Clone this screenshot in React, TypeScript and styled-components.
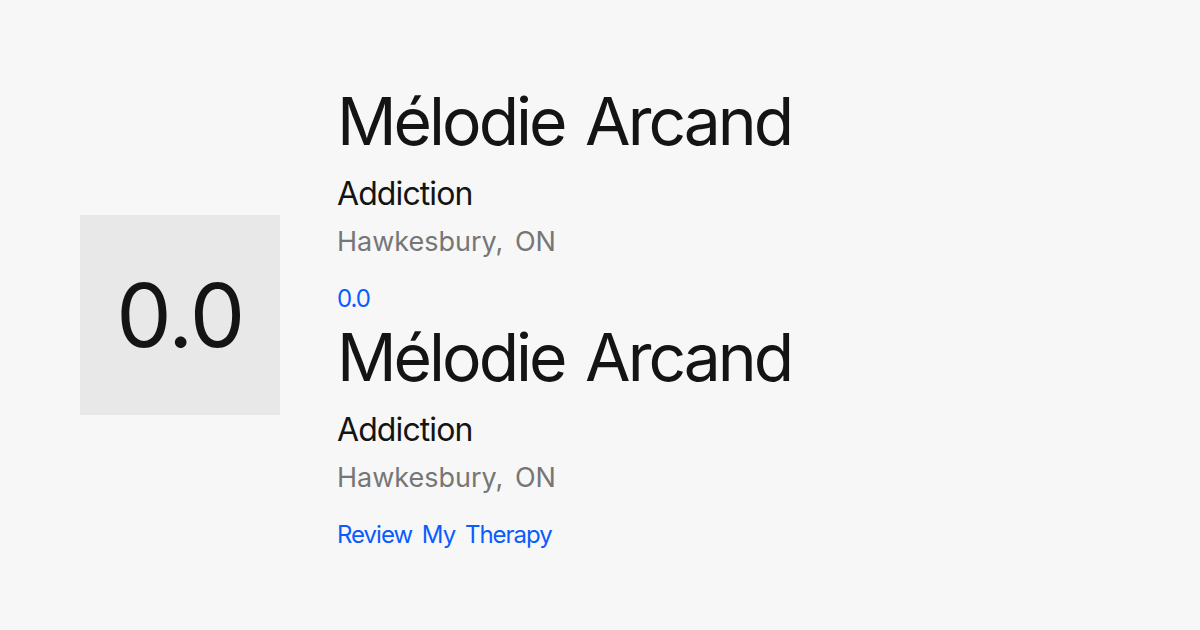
import React from "react";
import styled, { createGlobalStyle } from "styled-components";

const Global = createGlobalStyle`
  html, body { margin: 0; padding: 0; background: #f7f7f7; }
  body { font-family: Inter, "Liberation Sans", Arial, sans-serif; color: #141414; }
`;

const Page = styled.div`
  width: 1200px;
  height: 630px;
  display: flex;
  align-items: center;
  padding-left: 80px;
  box-sizing: border-box;
  gap: 57px;
`;

const ScoreBox = styled.div`
  width: 200px;
  height: 200px;
  background: #e8e8e8;
  display: flex;
  align-items: center;
  justify-content: center;
  font-size: 88px;
  line-height: 1;
  letter-spacing: -1.5px;
  color: #141414;
`;

const Info = styled.div`
  display: flex;
  flex-direction: column;
  padding-top: 5px;
`;

const Name = styled.div<{ $gap?: number }>`
  font-size: 66px;
  line-height: 66px;
  letter-spacing: -3px;
  word-spacing: 5px;
  margin-top: ${(p) => p.$gap ?? 0}px;
`;

const Specialty = styled.div`
  font-size: 32px;
  line-height: 32px;
  letter-spacing: -0.9px;
  margin-top: 24px;
`;

const Location = styled.div`
  font-size: 27px;
  line-height: 27px;
  color: #767676;
  margin-top: 18px;
  word-spacing: 4px;
`;

const Link = styled.a`
  font-size: 24px;
  line-height: 24px;
  color: #0a5cff;
  text-decoration: none;
  letter-spacing: -1px;
  word-spacing: 4px;
  margin-top: 32px;
`;

export default function App() {
  return (
    <>
      <Global />
      <Page>
        <ScoreBox>0.0</ScoreBox>
        <Info>
          <Name>Mélodie Arcand</Name>
          <Specialty>Addiction</Specialty>
          <Location>Hawkesbury, ON</Location>
          <Link>0.0</Link>
          <Name $gap={13}>Mélodie Arcand</Name>
          <Specialty>Addiction</Specialty>
          <Location>Hawkesbury, ON</Location>
          <Link>Review My Therapy</Link>
        </Info>
      </Page>
    </>
  );
}
